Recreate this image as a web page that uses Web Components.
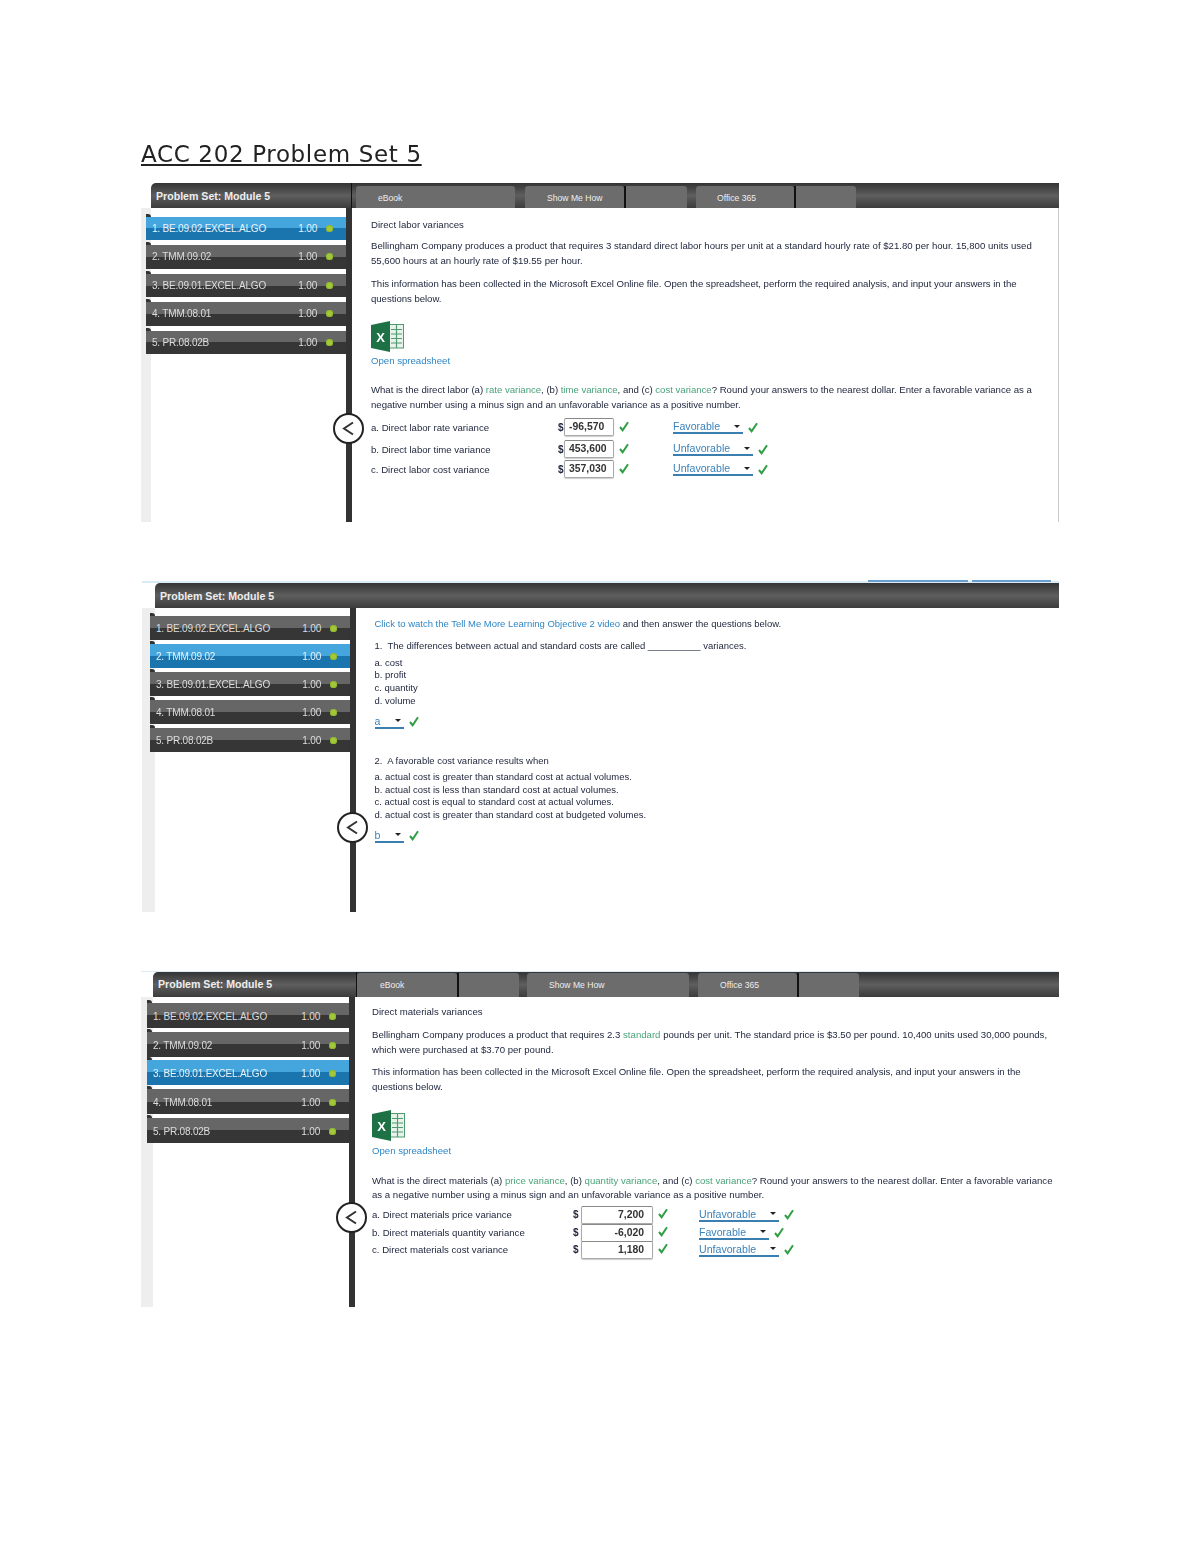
<!DOCTYPE html>
<html lang="en">
<head>
<meta charset="utf-8">
<title>ACC 202 Problem Set 5</title>
<style>
  html, body { margin: 0; background: #fff; }
  body { width: 1200px; height: 1553px; overflow: hidden; font-family: "Liberation Sans", Arial, sans-serif; color: #232a40; }
  .t { color: #4aa37a; }
  .l { color: #2f86c5; }
</style>
</head>
<body>
<doc-title>ACC 202 Problem Set 5</doc-title>

<ps-panel style="--left:141px; --gap:16px; --body-h:314px; --strip:10px; --side:200px; --nav-left:5px; --nav-top:8.5px; --nav-gap:5px; --item-h:23.5px; --main-left:19px; --edge:#ccc; --title-w:201px; --title-lh:27px; --tab-h:22px; --a-label:187px; --a-input:50px; --a-pad:1px; --a-gap:44px">
  <ps-tabs slot="tabs" style="--first:4px">
    <ps-tab w="159" pad="22">eBook</ps-tab>
    <ps-tab w="99" pad="22" gap="10">Show Me How</ps-tab>
    <ps-tab w="61" join></ps-tab>
    <ps-tab w="98" pad="21" gap="9">Office 365</ps-tab>
    <ps-tab w="60" join></ps-tab>
  </ps-tabs>
  <ps-item slot="nav" score="1.00" active>1. BE.09.02.EXCEL.ALGO</ps-item>
  <ps-item slot="nav" score="1.00">2. TMM.09.02</ps-item>
  <ps-item slot="nav" score="1.00">3. BE.09.01.EXCEL.ALGO</ps-item>
  <ps-item slot="nav" score="1.00">4. TMM.08.01</ps-item>
  <ps-item slot="nav" score="1.00">5. PR.08.02B</ps-item>

  <ps-para top="10">Direct labor variances</ps-para>
  <ps-para top="6.5">Bellingham Company produces a product that requires 3 standard direct labor hours per unit at a standard hourly rate of $21.80 per hour. 15,800 units used<br>55,600 hours at an hourly rate of $19.55 per hour.</ps-para>
  <ps-para top="9" ls="-.04">This information has been collected in the Microsoft Excel Online file. Open the spreadsheet, perform the required analysis, and input your answers in the<br>questions below.</ps-para>
  <ps-excel top="15" open="2"></ps-excel>
  <ps-para top="14.5" ls="-.02">What is the direct labor (a) <span class="t">rate variance</span>, (b) <span class="t">time variance</span>, and (c) <span class="t">cost variance</span>? Round your answers to the nearest dollar. Enter a favorable variance as a<br>negative number using a minus sign and an unfavorable variance as a positive number.</ps-para>
  <ps-answer top="5" label="a. Direct labor rate variance" value="-96,570" choice="Favorable" sel="70"></ps-answer>
  <ps-answer top="2" label="b. Direct labor time variance" value="453,600" choice="Unfavorable" sel="80"></ps-answer>
  <ps-answer top="0" label="c. Direct labor cost variance" value="357,030" choice="Unfavorable" sel="80"></ps-answer>
</ps-panel>

<ps-panel style="--left:142px; --gap:58px; --body-h:304px; --strip:13px; --side:200px; --nav-left:8px; --nav-top:8px; --nav-gap:4px; --item-h:24px; --main-left:18.5px; --edge:transparent; --title-w:904px; --title-line:transparent; --title-lh:26px; --toggle-top:204px; --text:9.48px">
  <ps-toplinks slot="top"></ps-toplinks>
  <ps-item slot="nav" score="1.00">1. BE.09.02.EXCEL.ALGO</ps-item>
  <ps-item slot="nav" score="1.00" active>2. TMM.09.02</ps-item>
  <ps-item slot="nav" score="1.00">3. BE.09.01.EXCEL.ALGO</ps-item>
  <ps-item slot="nav" score="1.00">4. TMM.08.01</ps-item>
  <ps-item slot="nav" score="1.00">5. PR.08.02B</ps-item>

  <ps-para top="9"><span class="l">Click to watch the Tell Me More Learning Objective 2 video</span> and then answer the questions below.</ps-para>
  <ps-para top="7.5">1.&nbsp; The differences between actual and standard costs are called __________ variances.</ps-para>
  <ps-para top="3" lh="12.8">a. cost<br>b. profit<br>c. quantity<br>d. volume</ps-para>
  <ps-pick top="7" choice="a" sel="29"></ps-pick>
  <ps-para top="25">2.&nbsp; A favorable cost variance results when</ps-para>
  <ps-para top="3" lh="12.6">a. actual cost is greater than standard cost at actual volumes.<br>b. actual cost is less than standard cost at actual volumes.<br>c. actual cost is equal to standard cost at actual volumes.<br>d. actual cost is greater than standard cost at budgeted volumes.</ps-para>
  <ps-pick top="7" choice="b" sel="29"></ps-pick>
</ps-panel>

<ps-panel style="--left:141px; --gap:60px; --top-line:#d8ebf7; --body-h:310px; --strip:12px; --side:202px; --nav-left:6px; --nav-top:6px; --nav-gap:3.7px; --item-h:25px; --item-drop:2px; --main-left:17px; --edge:transparent; --title-w:204px; --title-lh:25px; --tab-h:24px; --a-label:201px; --a-input:72px; --a-pad:3px; --a-gap:31px">
  <ps-tabs slot="tabs" style="--first:0px">
    <ps-tab w="100" pad="23">eBook</ps-tab>
    <ps-tab w="60" join></ps-tab>
    <ps-tab w="162" pad="22" gap="8">Show Me How</ps-tab>
    <ps-tab w="99" pad="22" gap="9">Office 365</ps-tab>
    <ps-tab w="60" join></ps-tab>
  </ps-tabs>
  <ps-item slot="nav" score="1.00">1. BE.09.02.EXCEL.ALGO</ps-item>
  <ps-item slot="nav" score="1.00">2. TMM.09.02</ps-item>
  <ps-item slot="nav" score="1.00" active>3. BE.09.01.EXCEL.ALGO</ps-item>
  <ps-item slot="nav" score="1.00">4. TMM.08.01</ps-item>
  <ps-item slot="nav" score="1.00">5. PR.08.02B</ps-item>

  <ps-para top="8">Direct materials variances</ps-para>
  <ps-para top="8.5">Bellingham Company produces a product that requires 2.3 <span class="t">standard</span> pounds per unit. The standard price is $3.50 per pound. 10,400 units used 30,000 pounds,<br>which were purchased at $3.70 per pound.</ps-para>
  <ps-para top="8" ls="-.02">This information has been collected in the Microsoft Excel Online file. Open the spreadsheet, perform the required analysis, and input your answers in the<br>questions below.</ps-para>
  <ps-excel top="16" open="3"></ps-excel>
  <ps-para top="15">What is the direct materials (a) <span class="t">price variance</span>, (b) <span class="t">quantity variance</span>, and (c) <span class="t">cost variance</span>? Round your answers to the nearest dollar. Enter a favorable variance<br>as a negative number using a minus sign and an unfavorable variance as a positive number.</ps-para>
  <ps-answer top="2" label="a. Direct materials price variance" value="7,200" choice="Unfavorable" sel="80" right></ps-answer>
  <ps-answer top="-2" label="b. Direct materials quantity variance" value="-6,020" choice="Favorable" sel="70" right></ps-answer>
  <ps-answer top="-3" label="c. Direct materials cost variance" value="1,180" choice="Unfavorable" sel="80" right></ps-answer>
</ps-panel>

<script>
const CHECK = `<svg width="10" height="11" viewBox="0 0 10 11"><path d="M1 6 L3.6 9.2 L9 1.2" fill="none" stroke="#2f9e44" stroke-width="2"/></svg>`

class DocTitle extends HTMLElement {
  constructor() {
    super()
    this.attachShadow({mode: 'open'}).innerHTML = `<style>
      :host {
        display: block;
        padding: 141px 0 0 141px;
        font: 23px/26px "DejaVu Sans", sans-serif;
        letter-spacing: .65px;
        color: #222;
        text-decoration: underline;
        text-decoration-thickness: 1.5px;
        text-underline-offset: 2px;
        filter: blur(.35px);
      }
    </style><slot></slot>`
  }
}

class PsPanel extends HTMLElement {
  constructor() {
    super()
    this.attachShadow({mode: 'open'}).innerHTML = `<style>
      :host {
        display: block;
        margin: var(--gap) 0 0 var(--left);
        width: calc(1059px - var(--left));
        border-top: 1px solid var(--top-line, transparent);
        margin-top: calc(var(--gap) - 1px);
        filter: blur(.55px);
        font-size: var(--text, 9.62px);
      }
      .head {
        margin-left: var(--strip);
        height: 25px;
        display: flex;
        border-top-left-radius: 5px;
        background: linear-gradient(#343434, #5e5e5e 50%, #3c3c3c);
      }
      .title {
        box-sizing: border-box;
        flex: 0 0 var(--title-w);
        padding-left: 5px;
        font: bold 10.6px/var(--title-lh) "Liberation Sans", sans-serif;
        color: #eee;
        border-right: 1px solid var(--title-line, #111);
      }
      .body {
        position: relative;
        display: flex;
        height: var(--body-h);
      }
      .side {
        flex: 0 0 calc(var(--nav-left) + var(--side));
        background: linear-gradient(90deg, #eee var(--strip), #fff var(--strip));
      }
      nav {
        display: flex;
        flex-direction: column;
        gap: var(--nav-gap);
        padding: var(--nav-top) 0 0 var(--nav-left);
      }
      .rule { flex: 0 0 6px; background: #333; }
      .main {
        flex: 1;
        padding-left: var(--main-left);
        border-right: 1px solid var(--edge);
      }
      .toggle {
        position: absolute;
        left: calc(var(--nav-left) + var(--side) - 13px);
        top: var(--toggle-top, 205px);
        box-sizing: border-box;
        width: 31px;
        height: 31px;
        border: 2px solid #222;
        border-radius: 50%;
        background: #fff;
      }
      .toggle svg { display: block; margin: 6px 0 0 7px; }
    </style>
    <slot name="top"></slot>
    <div class="head">
      <div class="title">Problem Set: Module 5</div>
      <slot name="tabs"></slot>
    </div>
    <div class="body">
      <div class="side"><nav><slot name="nav"></slot></nav></div>
      <div class="rule"></div>
      <div class="main"><slot></slot></div>
      <div class="toggle"><svg width="13" height="15" viewBox="0 0 13 15"><path d="M11 1.5 L2 7.5 L11 13.5" fill="none" stroke="#333" stroke-width="2"/></svg></div>
    </div>`
  }
}

class PsToplinks extends HTMLElement {
  constructor() {
    super()
    this.attachShadow({mode: 'open'}).innerHTML = `<style>
      :host {
        display: flex;
        height: 3px;
        padding-left: 726px;
        background: linear-gradient(transparent 1px, #d8ebf7 1px);
      }
      i { height: 2px; background: #6a9fcf; }
      .one { width: 100px; margin-right: 4px; }
      .two { width: 79px; }
    </style><i class="one"></i><i class="two"></i>`
  }
}

class PsTabs extends HTMLElement {
  constructor() {
    super()
    this.attachShadow({mode: 'open'}).innerHTML = `<style>
      :host {
        display: flex;
        align-items: flex-end;
        height: 25px;
        padding-left: var(--first);
      }
    </style><slot></slot>`
  }
}

class PsTab extends HTMLElement {
  constructor() {
    super()
    this.attachShadow({mode: 'open'}).innerHTML = `<style>
      :host {
        box-sizing: border-box;
        display: block;
        height: var(--tab-h);
        width: calc(var(--w) * 1px);
        margin-left: calc(var(--g, 0) * 1px);
        padding-left: calc(var(--p, 0) * 1px);
        background: #6c6c6c;
        border-radius: 3px 3px 0 0;
        font: 8.6px/24px "Liberation Sans", sans-serif;
        color: #eee;
      }
      :host([join]) { margin-left: 2px; box-shadow: -1px 0 0 #111, -2px 0 0 #111; border-radius: 0 3px 0 0; }
    </style><slot></slot>`
  }
  connectedCallback() {
    this.style.setProperty('--w', this.getAttribute('w'))
    this.style.setProperty('--p', this.getAttribute('pad') || 0)
    this.style.setProperty('--g', this.getAttribute('gap') || 0)
  }
}

class PsItem extends HTMLElement {
  constructor() {
    super()
    this.attachShadow({mode: 'open'}).innerHTML = `<style>
      :host {
        box-sizing: border-box;
        position: relative;
        display: flex;
        align-items: center;
        height: var(--item-h);
        padding: var(--item-drop, 0px) 14px 0 6px;
        background: linear-gradient(#666 50%, #363636 50%);
        font: 10px "Liberation Sans", sans-serif;
        letter-spacing: -.2px;
        color: #ddd;
      }
      :host([active]) { background: linear-gradient(#45a6de 50%, #1a75ae 50%); color: #e8f3fa; }
      :host::before {
        content: "";
        position: absolute;
        left: 0;
        top: -3px;
        width: 5px;
        height: 3px;
        background: #333;
        border-top-right-radius: 3px;
      }
      .label { flex: 1; white-space: nowrap; }
      .score { margin-right: 9px; }
      .dot { width: 7px; height: 7px; margin-right: -1px; border-radius: 50%; background: #a3c93a; box-shadow: inset 0 0 0 1px #8fb52f; }
    </style><span class="label"><slot></slot></span><span class="score"></span><span class="dot"></span>`
  }
  connectedCallback() {
    this.shadowRoot.querySelector('.score').textContent = this.getAttribute('score')
  }
}

class PsPara extends HTMLElement {
  constructor() {
    super()
    this.attachShadow({mode: 'open'}).innerHTML = `<style>
      :host {
        display: block;
        white-space: nowrap;
        line-height: var(--lh, 14.5px);
      }
    </style><slot></slot>`
  }
  connectedCallback() {
    this.style.marginTop = this.getAttribute('top') + 'px'
    if (this.hasAttribute('lh')) this.style.setProperty('--lh', this.getAttribute('lh') + 'px')
    if (this.hasAttribute('ls')) this.style.letterSpacing = this.getAttribute('ls') + 'px'
  }
}

class PsExcel extends HTMLElement {
  constructor() {
    super()
    this.attachShadow({mode: 'open'}).innerHTML = `<style>
      :host { display: block; }
      svg { display: block; }
      a { display: block; line-height: 14.5px; color: #2f86c5; }
    </style>
    <svg width="33" height="31" viewBox="0 0 33 31">
      <rect x="12" y="3.5" width="20.5" height="23.5" fill="#e9f3ec" stroke="#4f9a70"/>
      <path d="M20 8.5H31M20 13H31M20 17.5H31M20 22H31M25.5 4V27" stroke="#4f9a70" stroke-width="1.2" fill="none"/>
      <path d="M0 4 L19 0 V31 L0 27 Z" fill="#1e7145"/>
      <text x="9.5" y="20.5" text-anchor="middle" font-family="Liberation Sans" font-weight="bold" font-size="13" fill="#fff">X</text>
    </svg>
    <a>Open spreadsheet</a>`
  }
  connectedCallback() {
    this.style.marginTop = this.getAttribute('top') + 'px'
    this.shadowRoot.querySelector('a').style.marginTop = this.getAttribute('open') + 'px'
  }
}

class PsPick extends HTMLElement {
  constructor() {
    super()
    this.attachShadow({mode: 'open'}).innerHTML = `<style>
      :host { display: flex; align-items: center; gap: 5px; height: 14px; }
      .sel {
        box-sizing: border-box;
        display: flex;
        justify-content: space-between;
        align-items: center;
        height: 14px;
        padding: 0 3px 0 0;
        border-bottom: 2px solid #3b7fb0;
        color: #3a82bb;
        font-size: 10.6px;
      }
      .arrow { width: 0; height: 0; border: 3px solid transparent; border-top: 3.5px solid #222; border-bottom: 0; }
      svg { display: block; }
    </style><span class="sel"><span class="txt"></span><span class="arrow"></span></span>${CHECK}`
  }
  connectedCallback() {
    if (this.hasAttribute('top')) this.style.marginTop = this.getAttribute('top') + 'px'
    const sel = this.shadowRoot.querySelector('.sel')
    sel.style.width = this.getAttribute('sel') + 'px'
    sel.querySelector('.txt').textContent = this.getAttribute('choice')
  }
}

class PsAnswer extends HTMLElement {
  constructor() {
    super()
    this.attachShadow({mode: 'open'}).innerHTML = `<style>
      :host { display: flex; align-items: center; height: 20px; }
      .label { flex: 0 0 var(--a-label); }
      .cur { flex: 0 0 5px; min-width: 0; font-weight: bold; font-size: 10px; }
      .input {
        box-sizing: border-box;
        flex: 0 0 var(--a-input);
        margin-left: var(--a-pad);
        height: 18px;
        padding: 0 4px;
        border: 1px solid #aaa;
        border-top-color: #888;
        border-radius: 2px;
        background: #fff;
        box-shadow: 0 1px 1px #ccc;
        font: bold 10.4px/16px "Liberation Sans", sans-serif;
        color: #333;
      }
      :host([right]) .input { text-align: right; padding-right: 8px; }
      .ok { display: block; margin-left: 5px; }
      ps-pick { margin-left: var(--a-gap); }
    </style>
    <span class="label"></span><span class="cur">$</span><span class="input"></span><span class="ok">${CHECK}</span><ps-pick></ps-pick>`
  }
  connectedCallback() {
    this.style.marginTop = this.getAttribute('top') + 'px'
    const r = this.shadowRoot
    r.querySelector('.label').textContent = this.getAttribute('label')
    r.querySelector('.input').textContent = this.getAttribute('value')
    const pick = r.querySelector('ps-pick')
    pick.setAttribute('choice', this.getAttribute('choice'))
    pick.setAttribute('sel', this.getAttribute('sel'))
    pick.connectedCallback()
  }
}

customElements.define('doc-title', DocTitle)
customElements.define('ps-panel', PsPanel)
customElements.define('ps-toplinks', PsToplinks)
customElements.define('ps-tabs', PsTabs)
customElements.define('ps-tab', PsTab)
customElements.define('ps-item', PsItem)
customElements.define('ps-para', PsPara)
customElements.define('ps-excel', PsExcel)
customElements.define('ps-pick', PsPick)
customElements.define('ps-answer', PsAnswer)
</script>
</body>
</html>
